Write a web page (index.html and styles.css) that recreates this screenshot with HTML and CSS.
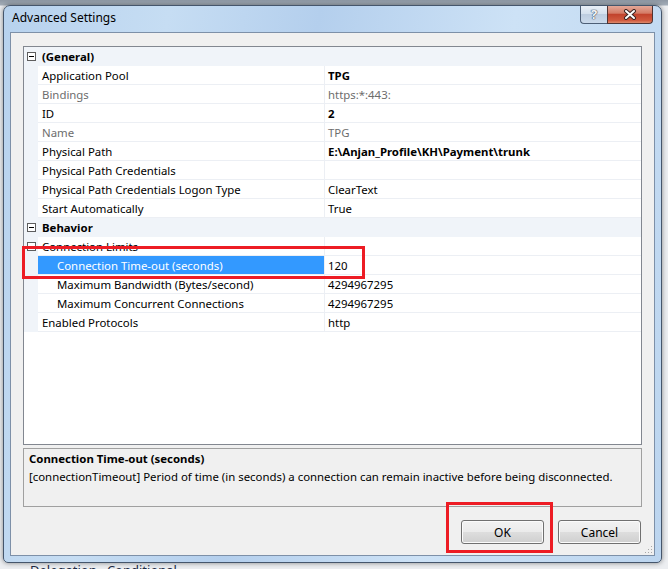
FILE: index.html
```html
<!DOCTYPE html>
<html lang="en">
  <head>
    <meta charset="UTF-8" />
    <title>Advanced Settings</title>
    <link rel="stylesheet" href="styles.css">
  </head>
  <body>
    <div class="desktop">
      <div class="behind-text">Delegation&nbsp;&nbsp;&nbsp;Conditional</div>

      <div class="window">
        <div class="titlebar">
          <span class="title">Advanced Settings</span>
          <div class="caption">
            <span class="cap-help">?</span>
            <span class="cap-close">
              <svg width="14" height="11" viewBox="0 0 14 11">
                <path d="M3 2 L11 9 M11 2 L3 9" stroke="#3b2424" stroke-width="4" stroke-linecap="round" />
                <path d="M3 2 L11 9 M11 2 L3 9" stroke="#ffffff" stroke-width="2" stroke-linecap="round" />
              </svg>
            </span>
          </div>
        </div>

        <div class="client">
          <div class="grid">
            <div class="row category">
              <div class="gutter"><span class="expander"></span></div>
              <div class="cat-name">(General)</div>
            </div>
            <div class="row">
              <div class="gutter"></div>
              <div class="name">Application Pool</div>
              <div class="value bold">TPG</div>
            </div>
            <div class="row readonly">
              <div class="gutter"></div>
              <div class="name">Bindings</div>
              <div class="value">https:*:443:</div>
            </div>
            <div class="row">
              <div class="gutter"></div>
              <div class="name">ID</div>
              <div class="value bold">2</div>
            </div>
            <div class="row readonly">
              <div class="gutter"></div>
              <div class="name">Name</div>
              <div class="value">TPG</div>
            </div>
            <div class="row">
              <div class="gutter"></div>
              <div class="name">Physical Path</div>
              <div class="value bold">E:\Anjan_Profile\KH\Payment\trunk</div>
            </div>
            <div class="row">
              <div class="gutter"></div>
              <div class="name">Physical Path Credentials</div>
              <div class="value"></div>
            </div>
            <div class="row">
              <div class="gutter"></div>
              <div class="name">Physical Path Credentials Logon Type</div>
              <div class="value">ClearText</div>
            </div>
            <div class="row">
              <div class="gutter"></div>
              <div class="name">Start Automatically</div>
              <div class="value">True</div>
            </div>
            <div class="row category">
              <div class="gutter"><span class="expander"></span></div>
              <div class="cat-name">Behavior</div>
            </div>
            <div class="row">
              <div class="gutter"><span class="expander"></span></div>
              <div class="name">Connection Limits</div>
              <div class="value"></div>
            </div>
            <div class="row sub selected">
              <div class="gutter"></div>
              <div class="name">Connection Time-out (seconds)</div>
              <div class="value">120</div>
            </div>
            <div class="row sub">
              <div class="gutter"></div>
              <div class="name">Maximum Bandwidth (Bytes/second)</div>
              <div class="value">4294967295</div>
            </div>
            <div class="row sub">
              <div class="gutter"></div>
              <div class="name">Maximum Concurrent Connections</div>
              <div class="value">4294967295</div>
            </div>
            <div class="row">
              <div class="gutter"></div>
              <div class="name">Enabled Protocols</div>
              <div class="value">http</div>
            </div>
          </div>

          <div class="desc">
            <div class="desc-title">Connection Time-out (seconds)</div>
            <div class="desc-text">[connectionTimeout] Period of time (in seconds) a connection can remain inactive before being disconnected.</div>
          </div>

          <div class="buttons">
            <button type="button" class="btn">OK</button>
            <button type="button" class="btn">Cancel</button>
          </div>

          <svg class="grip" width="9" height="9" viewBox="0 0 9 9">
            <rect x="7" y="1" width="1" height="1" fill="#a8a8a8" />
            <rect x="4" y="4" width="1" height="1" fill="#a8a8a8" />
            <rect x="7" y="4" width="1" height="1" fill="#a8a8a8" />
            <rect x="1" y="7" width="1" height="1" fill="#a8a8a8" />
            <rect x="4" y="7" width="1" height="1" fill="#a8a8a8" />
            <rect x="7" y="7" width="1" height="1" fill="#a8a8a8" />
          </svg>

          <!-- red annotation boxes drawn over the dialog -->
          <div class="mark mark-row"></div>
          <div class="mark mark-ok"></div>
        </div>
      </div>
    </div>
  </body>
</html>
```

FILE: styles.css
```css
body {
  margin: 0;
  font-family: "Noto Sans", "Open Sans", Arial, sans-serif;
  font-size: 11.4px;
  color: black;
}

.desktop {
  position: relative;
  width: 668px;
  height: 569px;
  overflow: hidden;
  background: linear-gradient(to bottom, #8e98a4 0, #a3adb8 5px, #eceef1 6px);
}

.behind-text {
  position: absolute;
  left: 30px;
  top: 561px;
  font-size: 13px;
  color: #1c2a44;
}

.window {
  position: absolute;
  left: 3px;
  top: 5px;
  width: 659px;
  height: 558px;
  box-sizing: border-box;
  border: 1px solid #45566c;
  border-radius: 7px 7px 5px 5px;
  background: linear-gradient(100deg, #b7d2ee 0%, #c6ddf3 22%, #b4cfed 42%, #cde2f6 68%, #bcd5ef 100%);
  box-shadow: 0 0 5px rgba(0, 0, 0, 0.45);
  display: flex;
  flex-direction: column;
}

.titlebar {
  height: 26px;
  display: flex;
  justify-content: space-between;
  padding: 0 8px;
}

.title {
  font-size: 12px;
  line-height: 24px;
  color: #000;
}

.caption {
  display: flex;
  height: 18px;
}

.cap-help {
  width: 27px;
  box-sizing: border-box;
  border: 1px solid #4d5f76;
  border-top: none;
  border-right: none;
  border-radius: 0 0 0 4px;
  background: linear-gradient(#e8eff7, #d5e1ee 45%, #bdcde0 50%, #cbdaeb);
  text-align: center;
  font-weight: bold;
  font-size: 13px;
  line-height: 17px;
  color: #f3f5f8;
  text-shadow: 0 0 1px #3d4b5e, 0 0 1px #3d4b5e, 0 0 1px #3d4b5e;
}

.cap-close {
  width: 46px;
  box-sizing: border-box;
  border: 1px solid #4e3434;
  border-top: none;
  border-radius: 0 0 4px 0;
  background: linear-gradient(#e3a898, #d47b66 42%, #c2432d 50%, #d05a3f 85%, #de8a6c);
  display: flex;
  align-items: center;
  justify-content: center;
}

.client {
  position: relative;
  flex: 1;
  margin: 0 6px 6px 6px;
  border: 1px solid #7d90a8;
  background-color: #f0f0f0;
  padding: 13px 12px 11px 12px;
  display: flex;
  flex-direction: column;
}

.grid {
  height: 399px;
  box-sizing: border-box;
  border: 1px solid #828790;
  background-color: white;
}

.row {
  display: grid;
  grid-template-columns: 14px 286px 1fr;
  height: 19px;
}

.gutter {
  position: relative;
  background-color: #f0f4f9;
}

.name,
.value,
.cat-name {
  box-sizing: border-box;
  height: 19px;
  line-height: 19px;
  border-bottom: 1px solid #eceff4;
  white-space: nowrap;
  overflow: hidden;
}

.name {
  padding-left: 4px;
}

.value {
  border-left: 1px solid #eceff4;
  padding-left: 3px;
}

.bold {
  font-weight: bold;
}

.readonly .name,
.readonly .value {
  color: #6d6d6d;
}

.category .cat-name {
  grid-column: 2 / 4;
  padding-left: 4px;
  font-weight: bold;
  background-color: #f0f4f9;
  border-bottom-color: #f0f4f9;
}

.sub .name {
  padding-left: 19px;
}

.selected .name {
  background-color: #3399ff;
  color: white;
}

.expander {
  position: absolute;
  left: 3px;
  top: 5px;
  width: 9px;
  height: 9px;
  box-sizing: border-box;
  border: 1px solid #5e5e5e;
  background-color: white;
}

.expander::after {
  content: "";
  position: absolute;
  left: 1px;
  top: 3px;
  width: 5px;
  height: 1px;
  background-color: black;
}

.desc {
  margin-top: 3px;
  height: 59px;
  box-sizing: border-box;
  border: 1px solid #a0a0a0;
  padding: 1px 5px;
  line-height: 18px;
}

.desc-title {
  font-weight: bold;
}

.buttons {
  margin-top: 13px;
  display: flex;
  justify-content: flex-end;
  gap: 14px;
  padding-right: 1px;
}

.btn {
  width: 83px;
  height: 24px;
  border: 1px solid #707070;
  border-radius: 3px;
  background: linear-gradient(#f2f2f2, #ebebeb 48%, #dddddd 52%, #cfcfcf);
  box-shadow: inset 0 0 0 1px #fbfbfb;
  font-family: "Noto Sans", "Open Sans", Arial, sans-serif;
  font-size: 12px;
  color: black;
  padding: 0;
}

.grip {
  position: absolute;
  right: 1px;
  bottom: 1px;
}

.mark {
  position: absolute;
  box-sizing: border-box;
  border: 3px solid #ed1c24;
}

.mark-row {
  left: 11px;
  top: 213px;
  width: 343px;
  height: 33px;
}

.mark-ok {
  left: 435px;
  top: 469px;
  width: 107px;
  height: 51px;
}
```
